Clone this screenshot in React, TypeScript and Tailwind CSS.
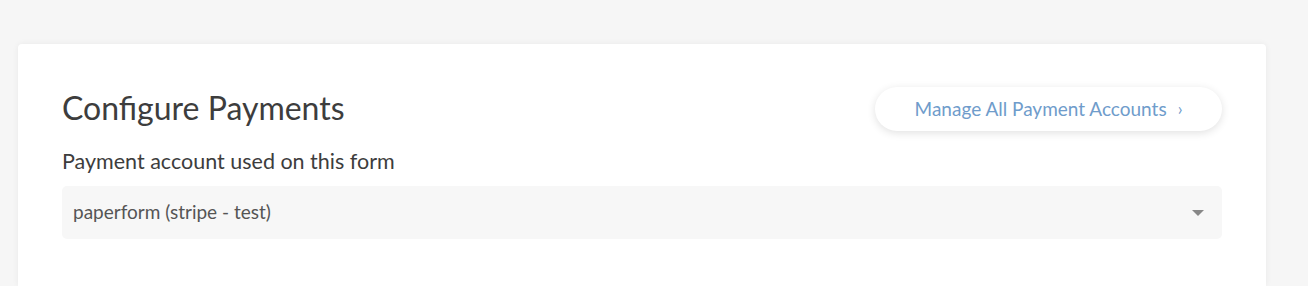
export default function App() {
  return (
    <div
      className="h-[286px] overflow-hidden bg-[#f6f6f6] pl-[18px] pr-[42px] pt-[44px]"
      style={{ fontFamily: "Lato, 'Open Sans', sans-serif" }}
    >
      <div className="h-[242px] rounded-t-[4px] bg-white px-[44px] pt-[43px] shadow-[0_0_6px_rgba(0,0,0,0.06)]">
        <div className="flex items-start justify-between">
          <h1 className="mt-[1px] text-[32px] leading-[40px] font-normal text-[#3d3d3d]">
            Configure Payments
          </h1>
          <button className="flex h-[44px] w-[347px] items-center justify-center gap-[11px] rounded-full bg-white text-[19px] text-[#6f9ccb] shadow-[0_2px_8px_rgba(0,0,0,0.12)]">
            <span>Manage All Payment Accounts</span>
            <span className="text-[17px]">›</span>
          </button>
        </div>
        <div className="mt-[16px] text-[21.5px] leading-[28px] text-[#3d3d3d]">
          Payment account used on this form
        </div>
        <div className="mt-[11px] flex h-[53px] items-center justify-between rounded-[5px] bg-[#f7f7f7] pl-[11px] pr-[18px]">
          <span className="text-[19px] text-[#555]">paperform (stripe - test)</span>
          <svg width="12" height="6" viewBox="0 0 12 6" className="text-[#888]">
            <path d="M0 0 H12 L6 6 Z" fill="currentColor" />
          </svg>
        </div>
      </div>
    </div>
  );
}
